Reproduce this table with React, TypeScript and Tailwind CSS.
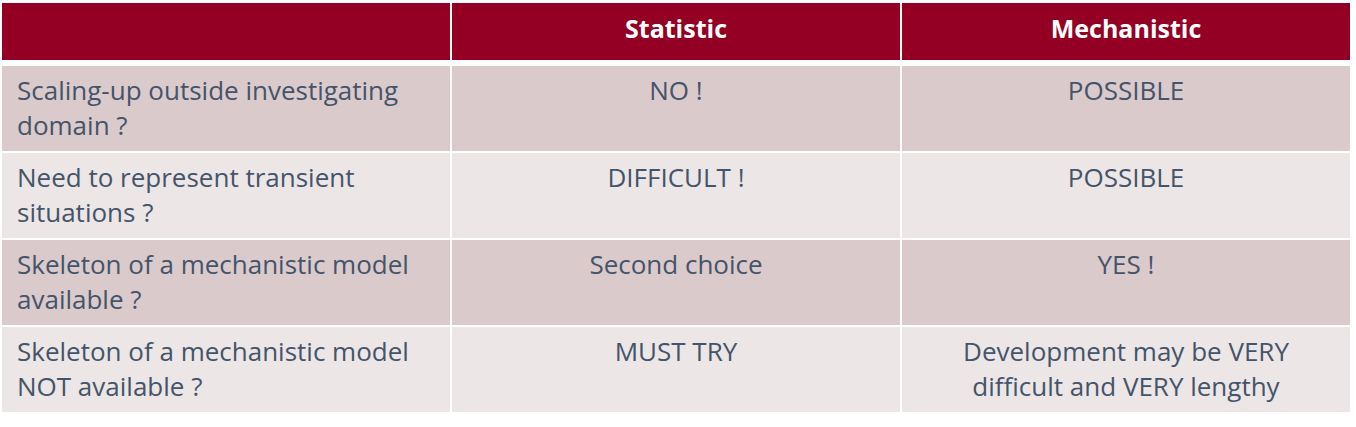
import React from "react";

const rows: [string, string, string][] = [
  ["Scaling-up outside investigating domain ?", "NO !", "POSSIBLE"],
  ["Need to represent transient situations ?", "DIFFICULT !", "POSSIBLE"],
  ["Skeleton of a mechanistic model available ?", "Second choice", "YES !"],
  ["Skeleton of a mechanistic model NOT available ?", "MUST TRY", "Development may be VERY difficult and VERY lengthy"],
];

export default function App() {
  return (
    <div
      className="w-[1356px] h-[427px] bg-white pt-[3px] pl-[2px]"
      style={{ fontFamily: '"Open Sans", "Noto Sans", sans-serif' }}
    >
      <div className="w-[1348px] flex flex-col">
        <div className="grid grid-cols-3 gap-x-[2px] h-[57px]">
          <div className="bg-[#940024]" />
          <div className="bg-[#940024] flex items-center justify-center pb-[6px] text-white font-bold text-[25px]">Statistic</div>
          <div className="bg-[#940024] flex items-center justify-center pb-[6px] text-white font-bold text-[25px]">Mechanistic</div>
        </div>
        <div className="flex flex-col gap-[2px] mt-[6px]">
          {rows.map((r, i) => {
            const bg = i % 2 === 0 ? "bg-[#dbcacb]" : "bg-[#ece6e6]";
            return (
              <div key={i} className="grid grid-cols-3 gap-x-[2px] h-[85px]">
                <div className={`${bg} pl-[15px] pr-[10px] pt-[7px] text-[26px] leading-[35px] text-[#44546a]`}>{r[0]}</div>
                <div className={`${bg} px-[30px] pt-[7px] text-center text-[26px] leading-[35px] text-[#44546a]`}>{r[1]}</div>
                <div className={`${bg} px-[30px] pt-[7px] text-center text-[26px] leading-[35px] text-[#44546a]`}>{r[2]}</div>
              </div>
            );
          })}
        </div>
      </div>
    </div>
  );
}
